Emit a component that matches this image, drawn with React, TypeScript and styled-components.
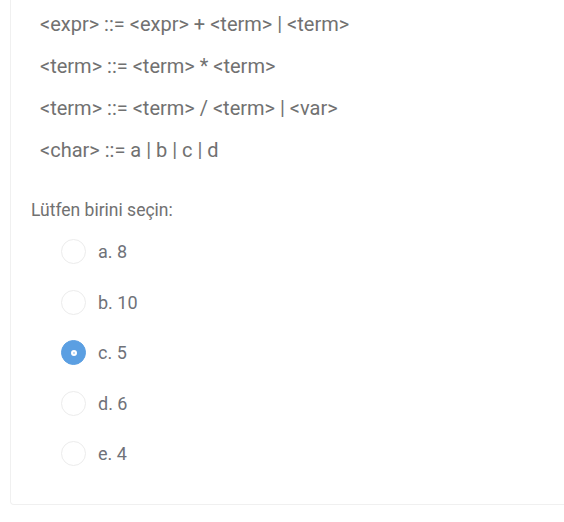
import React from "react"
import styled, { createGlobalStyle } from "styled-components"

const GlobalStyle = createGlobalStyle`
	html, body {
		margin: 0;
		padding: 0;
		background: #ffffff;
	}
	body {
		font-family: Roboto, "Noto Sans", "Liberation Sans", sans-serif;
	}
`

const Card = styled.div`
	margin: 0 -10px 0 10px;
	height: 505px;
	box-sizing: border-box;
	border: 1px solid #f0f0f0;
	border-top: none;
	border-radius: 0 0 4px 4px;
	padding: 14px 0 0 29px;
`

const Rule = styled.div`
	color: #717171;
	font-size: 20px;
	line-height: 20px;
	height: 42px;
`

const Prompt = styled.div`
	color: #717171;
	font-size: 17.5px;
	line-height: 20px;
	margin: 18px 0 0 -9px;
`

const Options = styled.div`
	display: flex;
	flex-direction: column;
	gap: 25.5px;
	margin: 19px 0 0 21px;
`

const Option = styled.label`
	display: flex;
	align-items: center;
	gap: 12px;
	color: #6f7279;
	font-size: 18px;
	height: 25px;
`

const Radio = styled.span<{ $checked?: boolean }>`
	width: 25px;
	height: 25px;
	box-sizing: border-box;
	border-radius: 50%;
	display: flex;
	align-items: center;
	justify-content: center;
	background: ${(p) => (p.$checked ? "#5b9fe2" : "#ffffff")};
	border: 1px solid ${(p) => (p.$checked ? "#5b9fe2" : "#ececec")};
	&::after {
		content: "";
		display: ${(p) => (p.$checked ? "block" : "none")};
		width: 6px;
		height: 6px;
		box-sizing: border-box;
		border-radius: 50%;
		border: 2px solid #ffffff;
		background: #a9cdf2;
	}
`

const rules = [
	"<expr> ::= <expr> + <term> | <term>",
	"<term> ::= <term> * <term>",
	"<term> ::= <term> / <term> | <var>",
	"<char> ::= a | b | c | d",
]

const options = ["a. 8", "b. 10", "c. 5", "d. 6", "e. 4"]

export default function App() {
	return (
		<>
			<GlobalStyle />
			<Card>
				{rules.map((r, i) => (
					<Rule key={i}>{r}</Rule>
				))}
				<Prompt>Lütfen birini seçin:</Prompt>
				<Options>
					{options.map((o, i) => (
						<Option key={o}>
							<Radio $checked={i === 2} />
							{o}
						</Option>
					))}
				</Options>
			</Card>
		</>
	)
}
